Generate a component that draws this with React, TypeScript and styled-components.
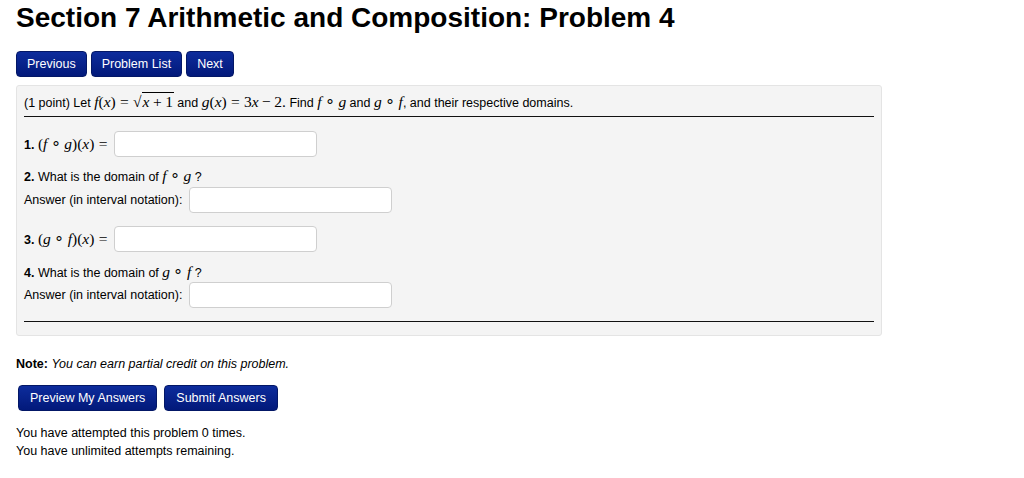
import React from 'react'
import styled, { createGlobalStyle } from 'styled-components'

const GlobalStyle = createGlobalStyle`
    body {
        margin: 0;
        background: #fff;
        font-family: "Liberation Sans", Arial, sans-serif;
        font-size: 12.5px;
        color: #000;
    }
`

const Page = styled.div`
    padding: 3px 16px 0 16px;
`

const Title = styled.h1`
    margin: 0;
    font-size: 28px;
    line-height: 30px;
    font-weight: bold;
`

const NavBar = styled.div`
    display: flex;
    gap: 4px;
    margin-top: 18px;
`

const Btn = styled.button<{ $pad?: number }>`
    height: 26px;
    padding: 0 ${p => p.$pad ?? 10}px;
    border: 1px solid #031766;
    border-radius: 4px;
    background: linear-gradient(#0d2c9c, #02197a);
    color: #fff;
    font-family: "Liberation Sans", Arial, sans-serif;
    font-size: 12.5px;
    cursor: pointer;
`

const ProblemBox = styled.div`
    width: 866px;
    box-sizing: border-box;
    margin-top: 8px;
    padding: 7px 7px 13px 7px;
    background: #f4f4f4;
    border: 1px solid #e4e4e4;
    border-radius: 3px;
`

const Intro = styled.div`
    line-height: 20px;
`

const Rule = styled.div<{ $top: number }>`
    margin-top: ${p => p.$top}px;
    border-top: 1px solid #111;
`

const Row = styled.div<{ $top: number }>`
    display: flex;
    align-items: center;
    gap: 7px;
    margin-top: ${p => p.$top}px;
`

const Question = styled.div<{ $top: number }>`
    margin-top: ${p => p.$top}px;
    line-height: 18px;
`

const AnswerInput = styled.input`
    width: 203px;
    height: 26px;
    box-sizing: border-box;
    border: 1px solid #cfcfcf;
    border-radius: 4px;
    background: #fff;
    padding: 2px 6px;
`

const Num = styled.b`
    font-weight: bold;
`

const M = styled.span`
    font-family: "Liberation Serif", "Times New Roman", serif;
    font-size: 15.5px;
    line-height: 1;
`

const I = styled.i`
    font-style: italic;
`

const Rel = styled.span<{ $end?: boolean }>`
    margin: 0 ${p => (p.$end ? 0 : 0.278)}em 0 0.278em;
`

const Op = styled.span`
    margin: 0 0.222em;
`

const Sqrt = styled.span`
    white-space: nowrap;
`

const Radicand = styled.span`
    border-top: 1px solid #000;
    padding: 0 1px;
`

const Note = styled.div`
    margin-top: 19px;
    line-height: 18px;
    em {
        font-style: italic;
    }
`

const SubmitBar = styled.div`
    display: flex;
    gap: 7px;
    margin: 12px 0 0 2px;
`

const Status = styled.div`
    margin-top: 13px;
    line-height: 18px;
`

const compose = (a: string, b: string) => (
    <M>
        <I>{a}</I><Op>∘</Op><I>{b}</I>
    </M>
)

export default function App() {
    return (
        <Page>
            <GlobalStyle />
            <Title>Section 7 Arithmetic and Composition: Problem 4</Title>
            <NavBar>
                <Btn>Previous</Btn>
                <Btn>Problem List</Btn>
                <Btn>Next</Btn>
            </NavBar>
            <ProblemBox>
                <Intro>
                    (1 point) Let{' '}
                    <M>
                        <I>f</I>(<I>x</I>)<Rel>=</Rel>
                        <Sqrt>√<Radicand><I>x</I><Op>+</Op>1</Radicand></Sqrt>
                    </M>{' '}
                    and{' '}
                    <M>
                        <I>g</I>(<I>x</I>)<Rel>=</Rel>3<I>x</I><Op>−</Op>2.
                    </M>{' '}
                    Find {compose('f', 'g')} and {compose('g', 'f')}, and their respective domains.
                </Intro>
                <Rule $top={3} />
                <Row $top={14}>
                    <span>
                        <Num>1.</Num>{' '}
                        <M>
                            (<I>f</I><Op>∘</Op><I>g</I>)(<I>x</I>)<Rel $end>=</Rel>
                        </M>
                    </span>
                    <AnswerInput />
                </Row>
                <Question $top={11}>
                    <Num>2.</Num> What is the domain of {compose('f', 'g')} ?
                </Question>
                <Row $top={1}>
                    <span>Answer (in interval notation):</span>
                    <AnswerInput />
                </Row>
                <Row $top={13}>
                    <span>
                        <Num>3.</Num>{' '}
                        <M>
                            (<I>g</I><Op>∘</Op><I>f</I>)(<I>x</I>)<Rel $end>=</Rel>
                        </M>
                    </span>
                    <AnswerInput />
                </Row>
                <Question $top={12}>
                    <Num>4.</Num> What is the domain of {compose('g', 'f')} ?
                </Question>
                <Row $top={0}>
                    <span>Answer (in interval notation):</span>
                    <AnswerInput />
                </Row>
                <Rule $top={13} />
            </ProblemBox>
            <Note>
                <b>Note:</b> <em>You can earn partial credit on this problem.</em>
            </Note>
            <SubmitBar>
                <Btn $pad={11}>Preview My Answers</Btn>
                <Btn $pad={11}>Submit Answers</Btn>
            </SubmitBar>
            <Status>
                You have attempted this problem 0 times.
                <br />
                You have unlimited attempts remaining.
            </Status>
        </Page>
    )
}
